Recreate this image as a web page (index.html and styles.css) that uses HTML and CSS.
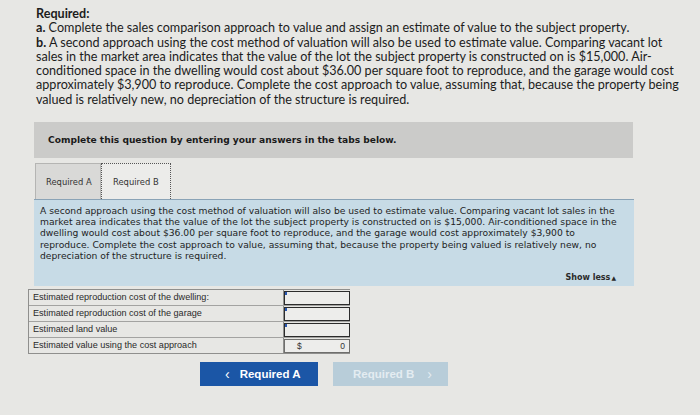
FILE: index.html
```html
<!DOCTYPE html>
<html>
<head>
<meta charset="utf-8">
<link rel="stylesheet" href="styles.css">
</head>
<body>
<div class="req">
  <div class="line"><b>Required:</b></div>
  <div class="line"><b>a.</b> Complete the sales comparison approach to value and assign an estimate of value to the subject property.</div>
  <div class="line"><b>b.</b> A second approach using the cost method of valuation will also be used to estimate value. Comparing vacant lot</div>
  <div class="line">sales in the market area indicates that the value of the lot the subject property is constructed on is $15,000. Air-</div>
  <div class="line">conditioned space in the dwelling would cost about $36.00 per square foot to reproduce, and the garage would cost</div>
  <div class="line">approximately $3,900 to reproduce. Complete the cost approach to value, assuming that, because the property being</div>
  <div class="line">valued is relatively new, no depreciation of the structure is required.</div>
</div>

<div class="instr">Complete this question by entering your answers in the tabs below.</div>

<div class="tabs">
  <div class="tab tab-a">Required A</div>
  <div class="tab tab-b">Required B</div>
</div>

<div class="panel">
  <div class="pline">A second approach using the cost method of valuation will also be used to estimate value. Comparing vacant lot sales in the</div>
  <div class="pline">market area indicates that the value of the lot the subject property is constructed on is $15,000. Air-conditioned space in the</div>
  <div class="pline">dwelling would cost about $36.00 per square foot to reproduce, and the garage would cost approximately $3,900 to</div>
  <div class="pline">reproduce. Complete the cost approach to value, assuming that, because the property being valued is relatively new, no</div>
  <div class="pline">depreciation of the structure is required.</div>
  <div class="showless">Show less<span class="tri">&#9650;</span></div>
</div>

<div class="table">
  <div class="row">
    <div class="label">Estimated reproduction cost of the dwelling:</div>
    <div class="input"><span class="mark"></span></div>
  </div>
  <div class="row">
    <div class="label">Estimated reproduction cost of the garage</div>
    <div class="input"><span class="mark"></span></div>
  </div>
  <div class="row">
    <div class="label">Estimated land value</div>
    <div class="input"><span class="mark"></span></div>
  </div>
  <div class="row">
    <div class="label">Estimated value using the cost approach</div>
    <div class="input total"><span class="dollar">$</span><span class="zero">0</span></div>
  </div>
</div>

<div class="buttons">
  <div class="btn btn-a"><span class="chev">&lsaquo;</span>Required A</div>
  <div class="btn btn-b">Required B<span class="chev">&rsaquo;</span></div>
</div>
</body>
</html>
```

FILE: styles.css
```css
html, body {
  margin: 0;
  padding: 0;
}
body {
  width: 700px;
  height: 415px;
  overflow: hidden;
  background: #e7e7e4;
  color: #1e1e1e;
}
.req {
  padding: 7px 0 0 36px;
  font-family: Lato, "Liberation Sans", sans-serif;
  font-size: 12.6px;
  line-height: 14.3px;
  color: #1c1c1c;
}
.line {
  white-space: nowrap;
}
.instr {
  margin: 15px 0 0 34px;
  width: 585px;
  height: 36px;
  padding-left: 14px;
  background: #cbcbc9;
  font-family: "DejaVu Sans", Verdana, sans-serif;
  font-weight: bold;
  font-size: 9.1px;
  line-height: 36px;
  color: #1a1a1a;
}
.tabs {
  display: flex;
  margin: 5px 0 0 35px;
  height: 36px;
}
.tab {
  box-sizing: border-box;
  height: 36px;
  font-family: "DejaVu Sans", Verdana, sans-serif;
  font-size: 8.4px;
  line-height: 36px;
  color: #333;
}
.tab-a {
  width: 66px;
  padding-left: 10px;
  background: #d9d9d7;
  border: 1px solid #b5b5b3;
  border-bottom: none;
}
.tab-b {
  width: 70px;
  padding-left: 11px;
  background: #ececea;
  border: 1px dotted #555;
  border-bottom: none;
}
.panel {
  margin-left: 34px;
  width: 600px;
  box-sizing: border-box;
  height: 87px;
  padding: 5px 18px 0 6px;
  background: #c7dbe6;
  border-top: 1px solid #8aa3b6;
  font-family: "DejaVu Sans", Verdana, sans-serif;
  font-size: 9.2px;
  line-height: 11.2px;
  color: #1e1e1e;
}
.pline {
  white-space: nowrap;
}
.showless {
  margin-top: 11px;
  text-align: right;
  font-weight: bold;
  font-size: 8px;
  color: #2a2a2a;
}
.tri {
  font-size: 6px;
  margin-left: 1px;
}
.table {
  margin: 3px 0 0 28px;
  width: 321px;
  border: 1px solid #8f8f8d;
  border-right: none;
}
.row {
  display: flex;
  height: 15px;
}
.row + .row {
  border-top: 1px solid #a3a3a1;
}
.label {
  box-sizing: border-box;
  width: 255px;
  padding-left: 4px;
  font-family: "Liberation Sans", Arial, sans-serif;
  font-size: 9.1px;
  line-height: 15px;
  color: #2a2a2a;
  border-right: 1px solid #8f8f8d;
}
.input {
  position: relative;
  box-sizing: border-box;
  width: 66px;
  margin: 1px 0 0;
  background: #ededeb;
  border: 1px solid #2c2c2c;
}
.mark {
  position: absolute;
  left: 0;
  top: 0;
  width: 2px;
  height: 3px;
  background: #2857b0;
}
.total {
  display: flex;
  justify-content: space-between;
  align-items: center;
  padding: 0 4px 0 12px;
  border: 1px solid #6f6f6d;
  font-family: "Liberation Sans", Arial, sans-serif;
  font-size: 8.5px;
  color: #333;
}
.buttons {
  display: flex;
  gap: 15px;
  margin: 8px 0 0 200px;
}
.btn {
  box-sizing: border-box;
  height: 24px;
  display: flex;
  align-items: center;
  font-family: "Liberation Sans", Arial, sans-serif;
  font-weight: bold;
  font-size: 11.5px;
}
.btn-a {
  width: 118px;
  padding-left: 25px;
  background: #1b56a6;
  color: #ffffff;
}
.btn-a .chev {
  font-size: 14px;
  font-weight: normal;
  margin-right: 10px;
}
.btn-b {
  width: 115px;
  padding-left: 20px;
  background: #b8cdd9;
  color: #e4ecf1;
}
.btn-b .chev {
  font-size: 14px;
  font-weight: normal;
  margin-left: 13px;
}
```
